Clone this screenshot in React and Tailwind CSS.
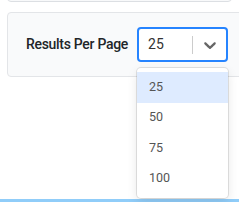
import React from 'react';

const options = ['25', '50', '75', '100'];

const App = () => {
  return (
    <div className="min-h-screen bg-white font-['Roboto',sans-serif] overflow-hidden">
      <div className="mx-[7px] -mt-[20px] h-[22px] rounded-b border border-[#dcdfe3] bg-[#f8f9fa]" />

      <div className="ml-[7px] -mr-[10px] mt-[10px] h-[65px] rounded border border-[#e3e5e8] bg-[#f9fafb] pl-[18px] flex items-center">
        <span className="text-[14px] font-medium tracking-[-0.3px] text-[#212529] mr-[9px]">Results Per Page</span>

        <div className="relative">
          <div className="w-[91px] h-[35px] rounded-[4px] border-2 border-[#2684ff] bg-white flex items-center">
            <span className="flex-1 pl-[9px] text-[14px] text-[#333333]">25</span>
            <span className="w-px h-[18px] bg-[#cccccc]" />
            <span className="w-[33px] flex items-center justify-center text-[#666666]">
              <svg width="20" height="20" viewBox="0 0 20 20" fill="currentColor">
                <path d="M4.516 7.548c0.436-0.446 1.043-0.481 1.576 0l3.908 3.747 3.908-3.747c0.533-0.481 1.141-0.446 1.574 0 0.436 0.445 0.408 1.197 0 1.615-0.406 0.418-4.695 4.502-4.695 4.502-0.217 0.223-0.502 0.335-0.787 0.335s-0.57-0.112-0.789-0.335c0 0-4.287-4.084-4.695-4.502s-0.436-1.170 0-1.615z" />
              </svg>
            </span>
          </div>

          <div className="absolute left-0 top-[41px] w-[91px] rounded-[4px] bg-white py-[4px] shadow-[0_0_0_1px_rgba(0,0,0,0.1),0_4px_11px_rgba(0,0,0,0.1)] z-10">
            {options.map((o, i) => (
              <div
                key={o}
                className={`h-[30.5px] pl-[12px] flex items-center text-[12.5px] text-[#555555] ${i === 0 ? 'bg-[#deebff]' : ''}`}
              >
                {o}
              </div>
            ))}
          </div>
        </div>
      </div>

      <div className="mt-[122px] h-[10px] bg-[#90cdf9]" />
    </div>
  );
};

export default App;
